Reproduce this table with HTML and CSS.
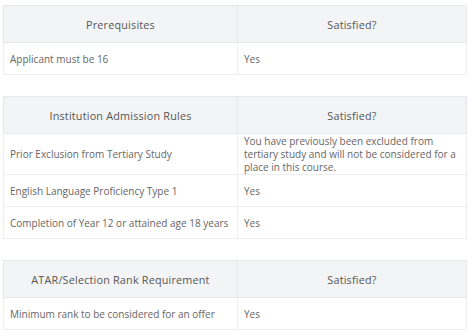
FILE: index.html
```html
<!DOCTYPE html>
<html>
<head>
<meta charset="utf-8">
<link rel="stylesheet" href="styles.css">
</head>
<body>
<table class="req">
  <thead>
    <tr><th class="c1">Prerequisites</th><th class="c2">Satisfied?</th></tr>
  </thead>
  <tbody>
    <tr><td>Applicant must be 16</td><td>Yes</td></tr>
  </tbody>
</table>
<table class="req">
  <thead>
    <tr><th class="c1">Institution Admission Rules</th><th class="c2">Satisfied?</th></tr>
  </thead>
  <tbody>
    <tr><td>Prior Exclusion from Tertiary Study</td><td>You have previously been excluded from tertiary study and will not be considered for a place in this course.</td></tr>
    <tr><td>English Language Proficiency Type 1</td><td>Yes</td></tr>
    <tr><td>Completion of Year 12 or attained age 18 years</td><td>Yes</td></tr>
  </tbody>
</table>
<table class="req last">
  <thead>
    <tr><th class="c1">ATAR/Selection Rank Requirement</th><th class="c2">Satisfied?</th></tr>
  </thead>
  <tbody>
    <tr><td>Minimum rank to be considered for an offer</td><td>Yes</td></tr>
  </tbody>
</table>
</body>
</html>
```

FILE: styles.css
```css
html, body {
  background: #ffffff;
}
body {
  margin: 5px 7px 0 3px;
  font-family: "Open Sans", "DejaVu Sans", sans-serif;
  font-size: 10px;
  color: #666666;
}
.req {
  width: 464px;
  border-collapse: collapse;
  table-layout: fixed;
  margin-bottom: 21px;
  border: 1px solid #eceef0;
}
.req.last {
  margin-bottom: 0;
}
.req .c1 {
  width: 221px;
}
.req th {
  background: #f3f4f6;
  height: 36px;
  padding: 0 6px;
  font-weight: 500;
  font-size: 10.8px;
  letter-spacing: 0.2px;
  color: #555555;
  text-align: center;
  border: 1px solid #e6e8eb;
}
.req td {
  height: 30px;
  padding: 1px 4px 0 6px;
  line-height: 13px;
  text-align: left;
  vertical-align: middle;
  border: 1px solid #eceef0;
}
```
